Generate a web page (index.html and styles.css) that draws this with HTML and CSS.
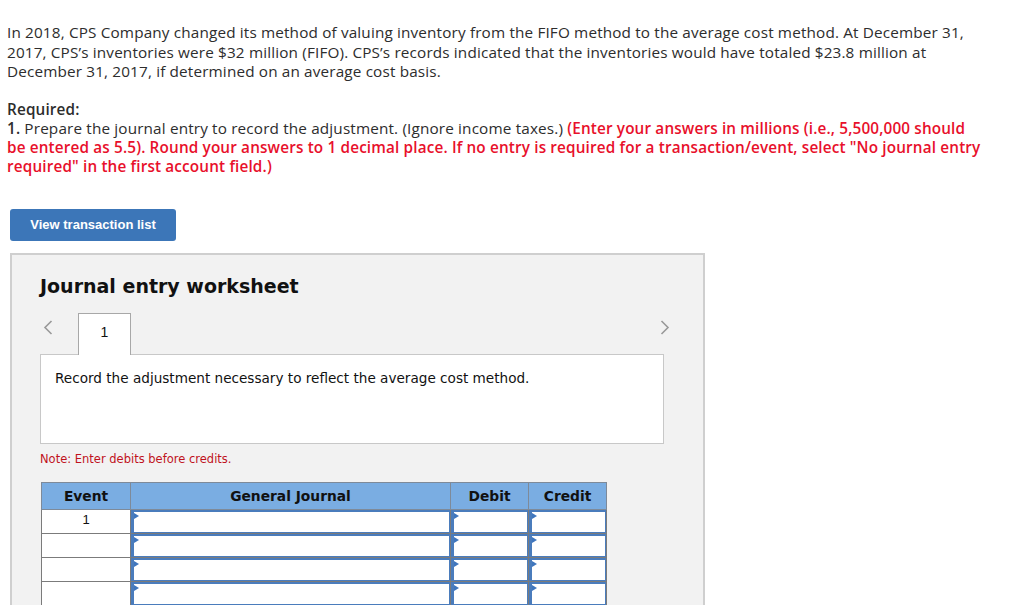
FILE: index.html
```html
<!DOCTYPE html>
<html>
<head>
<meta charset="utf-8">
<link rel="stylesheet" href="styles.css">
</head>
<body>
<div class="question">
  <p class="intro">In 2018, CPS Company changed its method of valuing inventory from the FIFO method to the average cost method. At December 31, 2017, CPS’s inventories were $32 million (FIFO). CPS’s records indicated that the inventories would have totaled $23.8 million at December 31, 2017, if determined on an average cost basis.</p>
  <div class="required">
    <div class="req-label">Required:</div>
    <div><b>1.</b> Prepare the journal entry to record the adjustment. (Ignore income taxes.) <span class="red">(Enter your answers in millions (i.e., 5,500,000 should be entered as 5.5). Round your answers to 1 decimal place. If no entry is required for a transaction/event, select "No journal entry required" in the first account field.)</span></div>
  </div>
</div>
<button class="btn">View transaction list</button>
<section class="panel">
  <h2 class="title">Journal entry worksheet</h2>
  <div class="tabs">
    <svg class="arrow" width="10" height="15" viewBox="0 0 10 15"><path d="M8.5 1 L2 7.5 L8.5 14" fill="none" stroke="#999" stroke-width="1.6"/></svg>
    <div class="tab">1</div>
    <div class="spacer"></div>
    <svg class="arrow right" width="10" height="15" viewBox="0 0 10 15"><path d="M1.5 1 L8 7.5 L1.5 14" fill="none" stroke="#999" stroke-width="1.6"/></svg>
  </div>
  <div class="box">Record the adjustment necessary to reflect the average cost method.</div>
  <div class="note">Note: Enter debits before credits.</div>
  <table class="journal">
    <thead>
      <tr><th class="c-event">Event</th><th class="c-gj">General Journal</th><th class="c-amt">Debit</th><th class="c-amt">Credit</th></tr>
    </thead>
    <tbody>
      <tr><td class="ev">1</td><td><div class="inp"></div></td><td><div class="inp"></div></td><td><div class="inp"></div></td></tr>
      <tr><td class="ev"></td><td><div class="inp"></div></td><td><div class="inp"></div></td><td><div class="inp"></div></td></tr>
      <tr><td class="ev"></td><td><div class="inp"></div></td><td><div class="inp"></div></td><td><div class="inp"></div></td></tr>
      <tr><td class="ev"></td><td><div class="inp"></div></td><td><div class="inp"></div></td><td><div class="inp"></div></td></tr>
    </tbody>
  </table>
</section>
</body>
</html>
```

FILE: styles.css
```css
html, body {
  margin: 0;
  padding: 0;
  background: #fff;
}
body {
  padding: 23px 0 0 7px;
  width: 1000px;
  overflow: hidden;
  height: 582px;
}
.question {
  font-family: "Open Sans", "Liberation Sans", sans-serif;
  font-size: 15.3px;
  color: #2d2d2d;
  width: 977px;
  font-variant-ligatures: none;
  letter-spacing: 0.15px;
}
.intro {
  margin: 0;
  line-height: 19.5px;
}
.required {
  margin-top: 18px;
  line-height: 19px;
}
.req-label {
  font-weight: 600;
}
.required b {
  font-weight: 600;
}
.red {
  color: #e8102b;
  font-weight: 600;
}
.btn {
  display: block;
  margin: 33px 0 0 3px;
  width: 166px;
  height: 32px;
  background: #3c76b8;
  color: #fff;
  border: none;
  border-radius: 3px;
  font-family: "Liberation Sans", Arial, sans-serif;
  font-weight: bold;
  font-size: 13px;
  padding: 0;
}
.panel {
  margin: 12px 0 0 3px;
  width: 695px;
  height: 400px;
  background: #f2f2f2;
  border: 1px solid #cfcfcf;
  border-width: 2px 2px 0 2px;
  padding: 20px 0 0 28px;
  box-sizing: border-box;
  font-family: "DejaVu Sans", Verdana, sans-serif;
}
.title {
  margin: 0;
  font-size: 19px;
  line-height: 22px;
  font-weight: bold;
  color: #111;
}
.tabs {
  display: flex;
  align-items: center;
  margin-top: 16px;
  width: 630px;
  height: 42px;
  position: relative;
  z-index: 1;
  margin-bottom: -1px;
}
.arrow {
  margin-left: 3px;
  margin-top: -13px;
}
.arrow.right {
  margin-left: 0;
  margin-top: -13px;
}
.tab {
  margin-left: 25px;
  width: 53px;
  height: 42px;
  box-sizing: border-box;
  background: #fff;
  border: 1px solid #a8a8a8;
  border-bottom: none;
  text-align: center;
  font-family: "Liberation Sans", Arial, sans-serif;
  font-size: 14px;
  line-height: 36px;
  color: #111;
}
.spacer {
  flex: 1;
}
.box {
  width: 624px;
  height: 90px;
  box-sizing: border-box;
  background: #fff;
  border: 1px solid #c8c8c8;
  padding: 15px 0 0 14px;
  font-size: 13.6px;
  color: #111;
}
.note {
  margin-top: 8px;
  font-size: 11.5px;
  color: #c0121d;
  line-height: 14px;
}
.journal {
  margin-top: 16px;
  margin-left: 1px;
  border-collapse: collapse;
}
.journal th {
  background: #7aade2;
  border: 1px solid #7e8a99;
  height: 26px;
  padding: 0;
  font-weight: bold;
  color: #111;
  font-size: 13.8px;
}
.c-event { width: 88px; }
.c-gj { width: 319px; }
.c-amt { width: 77px; }
.journal td {
  border: 1px solid #7b7b7b;
  height: 23px;
  padding: 0;
  background: #fff;
}
.journal td.ev {
  text-align: center;
  vertical-align: top;
  font-family: "Liberation Sans", Arial, sans-serif;
  font-size: 13px;
  line-height: 20px;
  color: #111;
}
.inp {
  position: relative;
  height: 23px;
  box-sizing: border-box;
  border: 2px solid #4a7cbc;
  border-width: 2px 1px 1px 3px;
  background: #fff;
}
.inp::before {
  content: "";
  position: absolute;
  left: 0;
  top: 1px;
  border-left: 5px solid #3f76bd;
  border-top: 3px solid transparent;
  border-bottom: 3px solid transparent;
}
```
